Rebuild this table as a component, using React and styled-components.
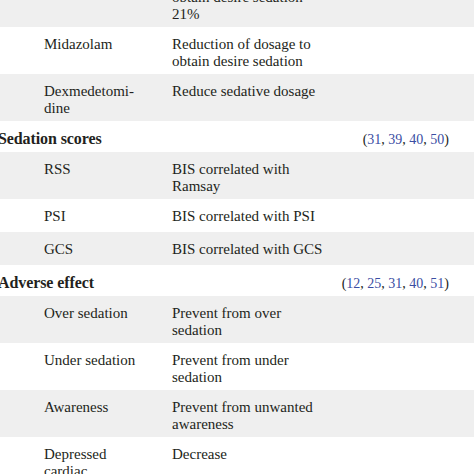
import React from "react";
import styled, { createGlobalStyle } from "styled-components";

const Global = createGlobalStyle`
  html, body { margin: 0; padding: 0; background: #ffffff; }
  body { width: 474px; height: 474px; overflow: hidden; }
`;

const Table = styled.div`
  width: 476px;
  margin-left: -2px;
  margin-top: -37px;
  font-family: "Liberation Serif", "Times New Roman", serif;
  font-size: 15px;
  line-height: 17px;
  color: #231f20;
`;

const Row = styled.div`
  display: grid;
  grid-template-columns: 174px 160px 1fr;
  box-sizing: border-box;
  min-height: 33px;
  padding: 9px 0 4px;
  background: ${(p) => (p.$shade ? "#efefef" : "#ffffff")};
`;

const Name = styled.div`
  padding-left: 46px;
  padding-right: 26px;
`;

const Effect = styled.div`
  padding-right: 4px;
`;

const Header = styled.div`
  display: flex;
  justify-content: space-between;
  align-items: baseline;
  box-sizing: border-box;
  height: 31px;
  padding: 9px 25px 5px 0;
  background: #ffffff;
`;

const Title = styled.div`
  font-weight: bold;
  font-size: 16px;
  letter-spacing: -0.1px;
`;

const Refs = styled.div`
  font-size: 14px;
`;

const Ref = styled.span`
  color: #3b4ea3;
`;

const rowsA = [
  { name: "Propofol", effect: "Reduction of dosage to obtain desire sedation 21%" },
  { name: "Midazolam", effect: "Reduction of dosage to obtain desire sedation" },
  { name: "Dexmedetomi-dine", effect: "Reduce sedative dosage" },
];

const rowsB = [
  { name: "RSS", effect: "BIS correlated with Ramsay" },
  { name: "PSI", effect: "BIS correlated with PSI" },
  { name: "GCS", effect: "BIS correlated with GCS" },
];

const rowsC = [
  { name: "Over sedation", effect: "Prevent from over sedation" },
  { name: "Under sedation", effect: "Prevent from under sedation" },
  { name: "Awareness", effect: "Prevent from unwanted awareness" },
  { name: "Depressed cardiac", effect: "Decrease" },
];

function Rows({ items, startShaded }) {
  return items.map((r, i) => (
    <Row key={r.name} $shade={(i % 2 === 0) === startShaded}>
      <Name>{r.name}</Name>
      <Effect>{r.effect}</Effect>
      <div />
    </Row>
  ));
}

function RefList({ refs }) {
  return (
    <Refs>
      (
      {refs.map((n, i) => (
        <React.Fragment key={n}>
          <Ref>{n}</Ref>
          {i < refs.length - 1 ? ", " : ""}
        </React.Fragment>
      ))}
      )
    </Refs>
  );
}

export default function App() {
  return (
    <>
      <Global />
      <Table>
        <Rows items={rowsA} startShaded={true} />
        <Header>
          <Title>Sedation scores</Title>
          <RefList refs={[31, 39, 40, 50]} />
        </Header>
        <Rows items={rowsB} startShaded={true} />
        <Header>
          <Title>Adverse effect</Title>
          <RefList refs={[12, 25, 31, 40, 51]} />
        </Header>
        <Rows items={rowsC} startShaded={true} />
      </Table>
    </>
  );
}
